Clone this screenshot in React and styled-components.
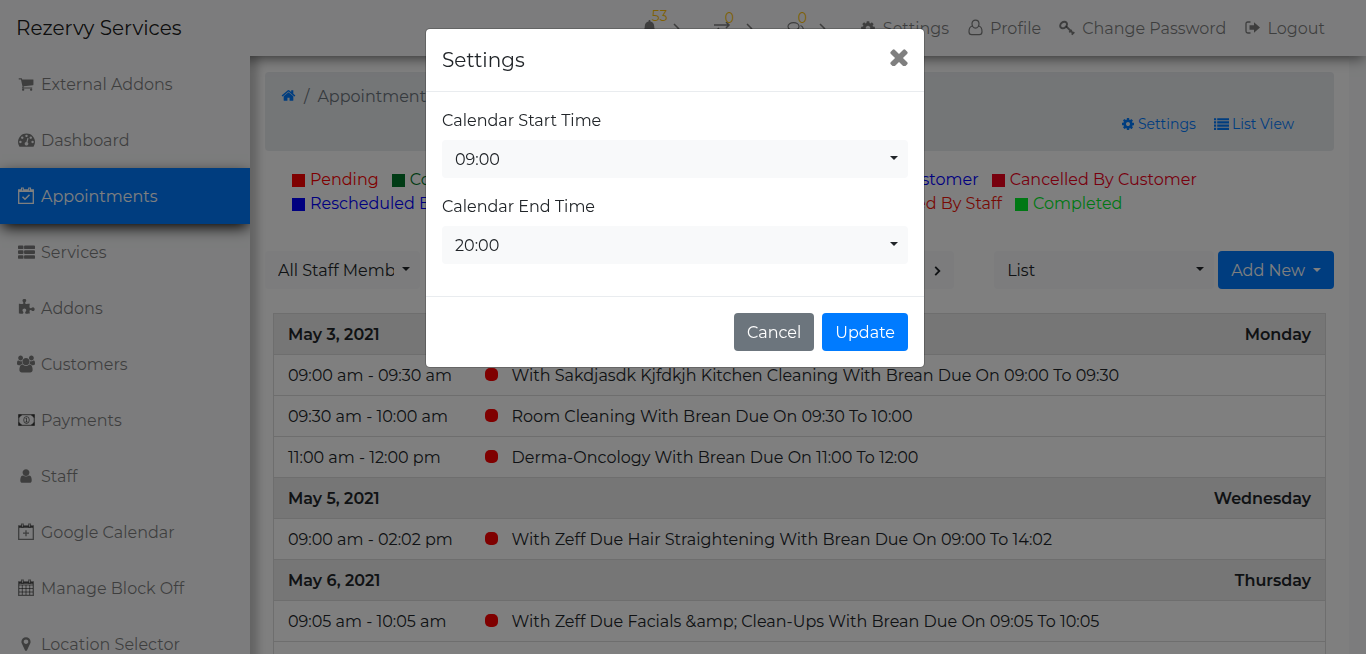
import React, { useState } from "react";
import styled, { createGlobalStyle, css } from "styled-components";
import { FaBell } from "react-icons/fa";

const GlobalStyle = createGlobalStyle`
  * {
    box-sizing: border-box;
  }
  body {
    margin: 0;
    height: 100vh;
    overflow: hidden;
    background: #f8f9fa;
    color: #212529;
    font-family: Montserrat, Inter, sans-serif;
    font-size: 16px;
    line-height: 25px;
  }
  button, select {
    font: inherit;
    color: inherit;
  }
  a {
    text-decoration: none;
    color: inherit;
  }
`;

const Header = styled.header`
  position: relative;
  z-index: 1;
  display: flex;
  align-items: center;
  justify-content: space-between;
  height: 56px;
  padding: 0 41px 0 16px;
  background: #f8f9fa;
  box-shadow: 0 5px 12px -2px rgba(0, 0, 0, 0.5);
`;

const Brand = styled.a`
  font-size: 20px;
  line-height: 30px;
  color: rgba(0, 0, 0, 0.9);
`;

const TopNav = styled.nav`
  display: flex;
  align-items: center;
  gap: 18px;
  padding-top: 1px;
  color: rgba(0, 0, 0, 0.5);
`;

const TopLink = styled.a`
  display: flex;
  align-items: center;
  gap: 7px;
`;

const Notice = styled.a`
  position: relative;
  display: flex;
  align-items: center;
  gap: 14px;
  width: 55px;
`;

const Count = styled.span`
  position: absolute;
  left: 11px;
  top: -16px;
  font-size: 14px;
  color: #ffc107;
`;

const Body = styled.div`
  display: flex;
  align-items: flex-start;
`;

const Sidebar = styled.aside`
  position: relative;
  z-index: 2;
  flex: none;
  width: 250px;
  height: calc(100vh - 56px);
  overflow: hidden;
  background: #f8f9fa;
`;

const SideLink = styled.a`
  display: flex;
  align-items: center;
  gap: 6px;
  height: 56px;
  padding: 1px 17px 0;
  color: rgba(0, 0, 0, 0.5);
  ${({ $active }) => $active && css`
    position: relative;
    background: #007bff;
    color: #fff;
    box-shadow: 0 5px 14px -2px #000;
  `}
`;

const IconBox = styled.span`
  display: flex;
  justify-content: center;
  width: ${({ $width }) => $width || "18px"};
  padding-bottom: 2px;
`;

const Main = styled.main`
  flex: 1;
  min-width: 0;
  min-height: calc(100vh - 56px);
  margin-right: 17px;
  padding: 16px 15px 0;
  background: #fff;
  box-shadow: inset 11px 0 8px -3px #c8c8c8;
`;

const Crumbs = styled.div`
  padding: 12px 40px 12px 16px;
  border-radius: 4px;
  background: #e9ecef;
  color: #6c757d;
`;

const CrumbLine = styled.div`
  display: flex;
  align-items: center;
  gap: 8px;
`;

const HomeLink = styled.a`
  display: flex;
  padding-bottom: 2px;
  color: #007bff;
`;

const CrumbLinks = styled.div`
  display: flex;
  justify-content: flex-end;
  gap: 18px;
  margin-top: 3px;
  padding-bottom: 2px;
  font-size: 14px;
  color: #007bff;
`;

const SmallLink = styled.a`
  display: flex;
  align-items: center;
  gap: 3px;
  svg {
    margin-bottom: 2px;
  }
`;

const Legend = styled.div`
  margin-top: 16px;
  padding: 0 27px;
`;

const LegendLine = styled.div`
  display: flex;
  gap: 13px;
  height: 24px;
  white-space: nowrap;
`;

const LegendItem = styled.span`
  display: flex;
  align-items: center;
  gap: 5px;
  color: ${({ $color }) => $color};
  &::before {
    content: "";
    width: 13px;
    height: 13px;
    margin-top: 2px;
    background: currentColor;
  }
`;

const Toolbar = styled.div`
  display: flex;
  align-items: center;
  gap: 4px;
  margin-top: 36px;
`;

const SelectBox = styled.div`
  position: relative;
  width: ${({ $width }) => $width};
  &::after {
    content: "";
    position: absolute;
    top: 16px;
    right: 10px;
    border: 4px solid transparent;
    border-top-color: currentColor;
    border-bottom: 0;
    pointer-events: none;
  }
`;

const Select = styled.select`
  display: block;
  width: 100%;
  height: 38px;
  padding: 0 26px 0 13px;
  border: 0;
  border-radius: 4px;
  background: #f8f9fa;
  appearance: none;
`;

const NextButton = styled.button`
  display: flex;
  align-items: center;
  justify-content: center;
  width: 34px;
  height: 38px;
  margin: 0 36px 0 auto;
  padding: 2px 0 0;
  border: 0;
  border-radius: 4px;
  background: #f8f9fa;
`;

const Button = styled.button`
  display: flex;
  align-items: center;
  gap: 8px;
  height: 38px;
  padding: 1px 13px 0;
  border: 0;
  border-radius: 4px;
  background: ${({ $secondary }) => ($secondary ? "#6c757d" : "#007bff")};
  color: #fff;
  white-space: nowrap;
`;

const Caret = styled.span`
  margin-bottom: 2px;
  border: 4px solid transparent;
  border-top-color: currentColor;
  border-bottom: 0;
`;

const Agenda = styled.table`
  width: calc(100% - 16px);
  margin: 24px 8px 0;
  border-collapse: collapse;
  border: 1px solid #ddd;
  white-space: nowrap;
`;

const DayHead = styled.th`
  height: 41px;
  padding: 1px 14px 0;
  border: solid #ddd;
  border-width: 1px 0;
  background: #ececec;
  font-weight: 600;
  text-align: ${({ $right }) => ($right ? "right" : "left")};
`;

const Cell = styled.td`
  height: 41px;
  padding: 1px 0 0 14px;
  border-top: 1px solid #ddd;
  width: ${({ $width }) => $width || "auto"};
`;

const Dot = styled.span`
  display: block;
  width: 13px;
  height: 13px;
  margin-bottom: 2px;
  border-radius: 5px;
  background: red;
`;

const Backdrop = styled.div`
  position: fixed;
  inset: 0;
  z-index: 10;
  padding: 28px 16px 28px 0;
  background: rgba(0, 0, 0, 0.5);
`;

const Dialog = styled.div`
  max-width: 500px;
  margin: 0 auto;
  border: 1px solid rgba(0, 0, 0, 0.2);
  border-radius: 5px;
  background: #fff;
  background-clip: padding-box;
`;

const DialogHeader = styled.div`
  display: flex;
  justify-content: space-between;
  padding: 16px;
  border-bottom: 1px solid #e9ecef;
`;

const DialogTitle = styled.h5`
  margin: 0;
  font-size: 20px;
  line-height: 30px;
  font-weight: 400;
`;

const CloseButton = styled.button`
  display: flex;
  align-items: center;
  height: 26px;
  padding: 0 0 2px;
  border: 0;
  background: none;
  color: #7f7f7f;
`;

const DialogBody = styled.div`
  padding: 16px 16px 32px;
`;

const Field = styled.div`
  & + & {
    margin-top: 16px;
  }
`;

const Label = styled.label`
  display: block;
  margin-bottom: 7px;
`;

const DialogFooter = styled.div`
  display: flex;
  justify-content: flex-end;
  gap: 8px;
  padding: 16px;
  border-top: 1px solid #e9ecef;
`;

const glyphs = {
  cog: "M1152 896q0-106-75-181t-181-75-181 75-75 181 75 181 181 75 181-75 75-181zm512-109v222q0 12-8 23t-20 13l-185 28q-19 54-39 91 35 50 107 138 10 12 10 25t-9 23q-27 37-99 108t-94 71q-12 0-26-9l-138-108q-44 23-91 38-16 136-29 186-7 28-36 28h-222q-14 0-24.500-8.500t-11.500-21.500l-28-184q-49-16-90-37l-141 107q-10 9-25 9-14 0-25-11-126-114-165-168-7-10-7-23 0-12 8-23 15-21 51-66.500t54-70.500q-27-50-41-99l-183-27q-13-2-21-12.500t-8-23.500v-222q0-12 8-23t19-13l186-28q14-46 39-92-40-57-107-138-10-12-10-24 0-10 9-23 26-36 98.500-107.500t94.500-71.500q13 0 26 10l138 107q44-23 91-38 16-136 29-186 7-28 36-28h222q14 0 24.500 8.500t11.500 21.500l28 184q49 16 90 37l142-107q9-9 24-9 13 0 25 10 129 119 165 170 7 8 7 22 0 12-8 23-15 21-51 66.500t-54 70.500q26 50 41 98l183 28q13 2 21 12.500t8 23.500z",
  home: "M1472 992v480q0 26-19 45t-45 19h-384v-384h-256v384h-384q-26 0-45-19t-19-45v-480q0-1 .5-3t.5-3l575-474 575 474q1 2 1 6zm223-69l-62 74q-8 9-21 11h-3q-13 0-21-7l-692-577-692 577q-12 8-24 7-13-2-21-11l-62-74q-8-10-7-23.500t11-21.500l719-599q32-26 76-26t76 26l244 204v-195q0-14 9-23t23-9h192q14 0 23 9t9 23v408l219 182q10 8 11 21.500t-7 23.500z",
  times: "M1490 1322q0 40-28 68l-136 136q-28 28-68 28t-68-28l-294-294-294 294q-28 28-68 28t-68-28l-136-136q-28-28-28-68t28-68l294-294-294-294q-28-28-28-68t28-68l136-136q28-28 68-28t68 28l294 294 294-294q28-28 68-28t68 28l136 136q28 28 28 68t-28 68l-294 294 294 294q28 28 28 68z",
  cart: "M704 1536q0 52-38 90t-90 38-90-38-38-90 38-90 90-38 90 38 38 90zm896 0q0 52-38 90t-90 38-90-38-38-90 38-90 90-38 90 38 38 90zm128-1088v512q0 24-16.500 42.500t-40.500 21.500l-1044 122q13 60 13 70 0 16-24 64h920q26 0 45 19t19 45-19 45-45 19h-1024q-26 0-45-19t-19-45q0-11 8-31.500t16-36 21.500-40 15.500-29.500l-177-823h-204q-26 0-45-19t-19-45 19-45 45-19h256q16 0 28.500 6.500t19.500 15.500 13 24.500 8 26 5.500 29.500 4.500 26h1201q26 0 45 19t19 45z",
  dashboard: "M384 1152q0-53-37.500-90.500t-90.500-37.500-90.500 37.500-37.500 90.500 37.500 90.500 90.500 37.500 90.500-37.500 37.500-90.500zm192-448q0-53-37.500-90.500t-90.500-37.500-90.500 37.500-37.500 90.500 37.500 90.500 90.500 37.500 90.500-37.500 37.500-90.500zm428 481l101-382q6-26-7.500-48.500t-38.500-29.500-48 6.500-30 39.500l-101 382q-60 5-107 43.500t-63 98.500q-20 77 20 146t117 89 146-20 89-117q16-60-6-117t-72-91zm660-33q0-53-37.500-90.500t-90.500-37.500-90.500 37.500-37.500 90.500 37.500 90.500 90.500 37.500 90.500-37.500 37.500-90.500zm-640-640q0-53-37.500-90.500t-90.500-37.500-90.500 37.500-37.500 90.500 37.500 90.500 90.500 37.500 90.500-37.500 37.500-90.500zm448 192q0-53-37.500-90.500t-90.500-37.500-90.500 37.500-37.500 90.500 37.500 90.500 90.500 37.500 90.500-37.500 37.500-90.500zm320 448q0 261-141 483-19 29-54 29h-1402q-35 0-54-29-141-221-141-483 0-182 71-348t191-286 286-191 348-71 348 71 286 191 191 286 71 348z",
  thList: "M96 256h384q96 0 96 96v192q0 96-96 96H96q-96 0-96-96V352q0-96 96-96zM96 768h384q96 0 96 96v192q0 96-96 96H96q-96 0-96-96V864q0-96 96-96zM96 1280h384q96 0 96 96v192q0 96-96 96H96q-96 0-96-96v-192q0-96 96-96zM736 256h960q96 0 96 96v192q0 96-96 96H736q-96 0-96-96V352q0-96 96-96zM736 768h960q96 0 96 96v192q0 96-96 96H736q-96 0-96-96V864q0-96 96-96zM736 1280h960q96 0 96 96v192q0 96-96 96H736q-96 0-96-96v-192q0-96 96-96z",
  list: "M0 256h256v256H0zM0 640h256v256H0zM0 1024h256v256H0zM0 1408h256v256H0zM384 256h1408v256H384zM384 640h1408v256H384zM384 1024h1408v256H384zM384 1408h1408v256H384z",
  puzzle: "M1755 1083q0 81-44.500 135t-123.500 54q-41 0-77.500-17.500t-59-38-56.500-38-71-17.500q-110 0-110 124 0 39 16 115t15 115v5q-22 0-33 1-34 3-97.500 11.500t-115.500 13.500-98 5q-61 0-103-26.500t-42-83.500q0-37 17.500-71t38-56.500 38-59 17.500-77.500q0-79-54-123.500t-135-44.500q-84 0-143 45.500t-59 127.500q0 43 15 83t33.500 64.500 33.500 53 15 50.500q0 45-46 89-37 35-117 35-95 0-245-24-9-2-27.500-4t-27.500-4l-13-2q-1 0-3-1-2 0-2-1v-1024q2 1 17.500 3.500t34 5 21.500 3.500q150 24 245 24 80 0 117-35 46-44 46-89 0-22-15-50.500t-33.500-53-33.500-64.500-15-83q0-82 59-127.500t144-45.500q80 0 134 44.500t54 123.500q0 41-17.500 77.500t-38 59-38 56.500-17.500 71q0 57 42 83.500t103 26.500q64 0 180-15t163-17v2q-1 2-3.500 17.500t-5 34-3.500 21.500q-24 150-24 245 0 80 35 117 44 46 89 46 22 0 50.500-15t53-33.500 64.500-33.500 83-15q82 0 127.500 59t45.500 143z",
  users: "M657 896q-162 5-265 128h-134q-82 0-138-40.500t-56-118.500q0-353 124-353 6 0 43.500 21t97.500 42.500 119 21.500q67 0 133-23-5 37-5 66 0 139 81 256zm1071 637q0 120-73 189.500t-194 69.500h-874q-121 0-194-69.500t-73-189.500q0-53 3.500-103.500t14-109 26.500-108.500 43-97.500 62-81 85.500-53.500 111.500-20q10 0 43 21.500t73 48 107 48 135 21.500 135-21.500 107-48 73-48 43-21.500q61 0 111.500 20t85.500 53.500 62 81 43 97.500 26.500 108.500 14 109 3.500 103.500zm-1024-1277q0 106-75 181t-181 75-181-75-75-181 75-181 181-75 181 75 75 181zm704 384q0 159-112.500 271.500t-271.500 112.500-271.500-112.500-112.500-271.500 112.500-271.500 271.500-112.500 271.500 112.500 112.500 271.500zm576 225q0 78-56 118.500t-138 40.500h-134q-103-123-265-128 81-117 81-256 0-29-5-66 66 23 133 23 59 0 119-21.500t97.500-42.500 43.500-21q124 0 124 353zm-128-609q0 106-75 181t-181 75-181-75-75-181 75-181 181-75 181 75 75 181z",
  user: "M1536 1399q0 109-62.500 187t-150.500 78h-854q-88 0-150.500-78t-62.500-187q0-85 8.500-160.500t31.500-152 58.500-131 94-89 134.500-34.500q131 128 313 128t313-128q76 0 134.500 34.500t94 89 58.500 131 31.500 152 8.500 160.500zm-256-887q0 159-112.500 271.500t-271.500 112.500-271.500-112.500-112.500-271.500 112.500-271.500 271.500-112.500 271.500 112.500 112.500 271.500z",
  marker: "M1152 640q0-106-75-181t-181-75-181 75-75 181 75 181 181 75 181-75 75-181zm256 0q0 109-33 179l-364 774q-16 33-47.500 52t-67.500 19-67.500-19-46.500-52l-365-774q-33-70-33-179 0-212 150-362t362-150 362 150 150 362z",
};

const Glyph = ({ name, size = 16, box = "0 0 1792 1792" }) => (
  <svg width={size} height={size} viewBox={box} fill="currentColor" aria-hidden="true">
    <path d={glyphs[name]} />
  </svg>
);

const CalendarIcon = ({ type }) => (
  <svg width="16" height="17" viewBox="0 0 16 17" fill="none" stroke="currentColor" strokeWidth="1.3">
    <path d="M.7 3h14.6v13.3H.7z" />
    <path d="M1 3h14v2H1z" fill="currentColor" stroke="none" />
    <path d="M3.500 1h1.800v3H3.500zM10.700 1h1.800v3h-1.800z" fill={type === "check" ? "#007bff" : "#f8f9fa"} strokeWidth="1.100" />
    {type === "check" && <path d="M4.500 9.700l2.500 2.600 4.500-4.500" strokeWidth="1.500" />}
    {type === "plus" && <path d="M8 7.200v6M5 10.200h6" />}
    {type === "grid" && <path d="M1 6h14M1 9.500h14M1 13h14M4.300 6v10M8 6v10M11.700 6v10" strokeWidth="1" />}
  </svg>
);

const MoneyIcon = () => (
  <svg width="17" height="12" viewBox="0 0 17 12" fill="none" stroke="currentColor">
    <path d="M.7.7h15.600v10.600H.7z" strokeWidth="1.300" />
    <path d="M1 1h2.500L1 3.500zM16 1h-2.500L16 3.500zM1 11h2.500L1 8.500zM16 11h-2.500L16 8.500z" fill="currentColor" />
    <ellipse cx="8.500" cy="6" rx="2.800" ry="3.500" />
    <path d="M7.500 4.500l1-.5v4M7.300 8h2.400" />
  </svg>
);

const ProfileIcon = () => (
  <svg width="15" height="17" viewBox="0 0 15 17" fill="none" stroke="currentColor" strokeWidth="1.200">
    <path d="M7.500 1.100c2.200 0 3.500 1.600 3.500 3.700S9.700 9.100 7.500 9.100 4 6.900 4 4.800s1.300-3.700 3.500-3.700z" />
    <path d="M4.300 7C2 7.400 1 10 1 12.800c0 2 1.200 2.900 2.700 2.900h7.600c1.500 0 2.700-.9 2.700-2.900 0-2.800-1-5.400-3.300-5.800" />
  </svg>
);

const KeyIcon = () => (
  <svg width="16" height="16" viewBox="0 0 16 16" fill="none" stroke="currentColor" strokeWidth="2">
    <ellipse cx="4.600" cy="5" rx="2.800" ry="3.700" transform="rotate(50 4.600 5)" />
    <path d="M7.300 6.500l7.200 7.200M10.300 12.300l2.400-2.400M12.700 14.700l2.600-2.600" strokeWidth="1.800" />
  </svg>
);

const LogoutIcon = () => (
  <svg width="15" height="13" viewBox="0 0 15 13">
    <path d="M5.500 1H2.800C1.600 1 1 1.700 1 2.800v7.400C1 11.300 1.600 12 2.800 12h2.700" fill="none" stroke="currentColor" strokeWidth="1.300" />
    <path d="M4.500 4.300H9V1.200l6 5.300-6 5.300V8.700H4.500z" fill="currentColor" />
  </svg>
);

const ArrowIcon = () => (
  <svg width="17" height="12" viewBox="0 0 17 12" fill="none" stroke="currentColor" strokeWidth="1.500">
    <path d="M0 3h15M12 0l3 3-3 3M17 9H2M5 6L2 9l3 3" />
  </svg>
);

const ChatIcon = () => (
  <svg width="17" height="12" viewBox="0 0 17 12" fill="none" stroke="currentColor" strokeWidth="1.200">
    <path d="M6.500 .7C3.400.7 1 2.400 1 4.500c0 1.300.8 2.400 2 3.100L2.200 9.500l2.600-1.200c3.900.6 7.200-1.200 7.200-3.800C12 2.400 9.600.7 6.500.7z" />
    <path d="M13.500 3.500c3.500 1.500 3.200 4.500 1.300 5.700l.8 2-2.800-1.300c-2 .3-4-.1-5-1" />
  </svg>
);

const Chevron = ({ height = 11, stroke = 2 }) => (
  <svg width="7" height={height} viewBox="0 0 7 11" fill="none" stroke="currentColor" strokeWidth={stroke}>
    <path d="M1 1l4.500 4.500L1 10" />
  </svg>
);

const menu = [
  { label: "External Addons", icon: <Glyph name="cart" /> },
  { label: "Dashboard", icon: <Glyph name="dashboard" size={17} /> },
  { label: "Appointments", icon: <CalendarIcon type="check" />, active: true },
  { label: "Services", icon: <Glyph name="thList" size={17} /> },
  { label: "Addons", icon: <Glyph name="puzzle" size={17} /> },
  { label: "Customers", icon: <Glyph name="users" size={18} box="64 0 1920 1792" /> },
  { label: "Payments", icon: <MoneyIcon /> },
  { label: "Staff", icon: <Glyph name="user" /> },
  { label: "Google Calendar", icon: <CalendarIcon type="plus" /> },
  { label: "Manage Block Off", icon: <CalendarIcon type="grid" /> },
  { label: "Location Selector", icon: <Glyph name="marker" /> },
];

const legend = [
  [
    ["Pending", "#ff0000"],
    ["Confirmed", "#00772a"],
    ["Rescheduled By Providers", "#0000ff"],
    ["Rescheduled By Customer", "#0000ff"],
    ["Cancelled By Customer", "#f0001c"],
  ],
  [
    ["Rescheduled By Staff", "#0000ff"],
    ["Denied By Staff", "#ff0000"],
    ["Marked As No Show", "#ff0000"],
    ["Cancelled By Staff", "#f0140a"],
    ["Completed", "#00f028"],
  ],
];

const days = [
  {
    date: "May 3, 2021",
    day: "Monday",
    events: [
      ["09:00 am - 09:30 am", "With Sakdjasdk Kjfdkjh Kitchen Cleaning With Brean Due On 09:00 To 09:30"],
      ["09:30 am - 10:00 am", "Room Cleaning With Brean Due On 09:30 To 10:00"],
      ["11:00 am - 12:00 pm", "Derma-Oncology With Brean Due On 11:00 To 12:00"],
    ],
  },
  {
    date: "May 5, 2021",
    day: "Wednesday",
    events: [["09:00 am - 02:02 pm", "With Zeff Due Hair Straightening With Brean Due On 09:00 To 14:02"]],
  },
  {
    date: "May 6, 2021",
    day: "Thursday",
    events: [
      ["09:05 am - 10:05 am", "With Zeff Due Facials &amp; Clean-Ups With Brean Due On 09:05 To 10:05"],
      ["", ""],
    ],
  },
];

const App = () => {
  const [start, setStart] = useState("09:00");
  const [end, setEnd] = useState("20:00");
  const [open, setOpen] = useState(true);

  return (
    <>
      <GlobalStyle />
      <Header>
        <Brand href="#">Rezervy Services</Brand>
        <TopNav>
          <Notice href="#"><IconBox><FaBell size={15} /></IconBox><Chevron stroke={1.5} /><Count>53</Count></Notice>
          <Notice href="#"><IconBox><ArrowIcon /></IconBox><Chevron stroke={1.5} /><Count>0</Count></Notice>
          <Notice href="#"><IconBox><ChatIcon /></IconBox><Chevron stroke={1.5} /><Count>0</Count></Notice>
          <TopLink href="#"><IconBox $width="16px"><Glyph name="cog" /></IconBox>Settings</TopLink>
          <TopLink href="#"><IconBox $width="16px"><ProfileIcon /></IconBox>Profile</TopLink>
          <TopLink href="#"><IconBox $width="16px"><KeyIcon /></IconBox>Change Password</TopLink>
          <TopLink href="#"><IconBox $width="16px"><LogoutIcon /></IconBox>Logout</TopLink>
        </TopNav>
      </Header>
      <Body>
        <Sidebar>
          {menu.map((item) => (
            <SideLink key={item.label} href="#" $active={item.active}>
              <IconBox>{item.icon}</IconBox>
              {item.label}
            </SideLink>
          ))}
        </Sidebar>
        <Main>
          <Crumbs>
            <CrumbLine>
              <HomeLink href="#" aria-label="Home"><Glyph name="home" size={15} /></HomeLink>
              <span>/</span>
              <span>Appointments</span>
            </CrumbLine>
            <CrumbLinks>
              <SmallLink href="#"><Glyph name="cog" size={14} />Settings</SmallLink>
              <SmallLink href="#"><Glyph name="list" size={15} />List View</SmallLink>
            </CrumbLinks>
          </Crumbs>
          <Legend>
            {legend.map((line, i) => (
              <LegendLine key={i}>
                {line.map(([label, color]) => (
                  <LegendItem key={label} $color={color}>{label}</LegendItem>
                ))}
              </LegendLine>
            ))}
          </Legend>
          <Toolbar>
            <SelectBox $width="155px">
              <Select aria-label="Staff member"><option>All Staff Members</option></Select>
            </SelectBox>
            <NextButton aria-label="Next"><Chevron height={10} /></NextButton>
            <SelectBox $width="220px">
              <Select aria-label="View"><option>List</option></Select>
            </SelectBox>
            <Button>Add New <Caret /></Button>
          </Toolbar>
          <Agenda>
            {days.map((d) => (
              <tbody key={d.date}>
                <tr>
                  <DayHead colSpan={2}>{d.date}</DayHead>
                  <DayHead $right>{d.day}</DayHead>
                </tr>
                {d.events.map(([time, title]) => (
                  <tr key={time}>
                    <Cell $width="197px">{time}</Cell>
                    <Cell $width="27px">{time && <Dot />}</Cell>
                    <Cell>{title}</Cell>
                  </tr>
                ))}
              </tbody>
            ))}
          </Agenda>
        </Main>
      </Body>
      {open && (
        <Backdrop>
          <Dialog role="dialog" aria-labelledby="dialog-title">
            <DialogHeader>
              <DialogTitle id="dialog-title">Settings</DialogTitle>
              <CloseButton aria-label="Close" onClick={() => setOpen(false)}>
                <Glyph name="times" size={18} box="280 280 1232 1232" />
              </CloseButton>
            </DialogHeader>
            <DialogBody>
              <Field>
                <Label htmlFor="start">Calendar Start Time</Label>
                <SelectBox $width="100%">
                  <Select id="start" value={start} onChange={(e) => setStart(e.target.value)}>
                    <option>09:00</option>
                    <option>10:00</option>
                  </Select>
                </SelectBox>
              </Field>
              <Field>
                <Label htmlFor="end">Calendar End Time</Label>
                <SelectBox $width="100%">
                  <Select id="end" value={end} onChange={(e) => setEnd(e.target.value)}>
                    <option>20:00</option>
                    <option>21:00</option>
                  </Select>
                </SelectBox>
              </Field>
            </DialogBody>
            <DialogFooter>
              <Button $secondary onClick={() => setOpen(false)}>Cancel</Button>
              <Button onClick={() => setOpen(false)}>Update</Button>
            </DialogFooter>
          </Dialog>
        </Backdrop>
      )}
    </>
  );
};

export default App;
